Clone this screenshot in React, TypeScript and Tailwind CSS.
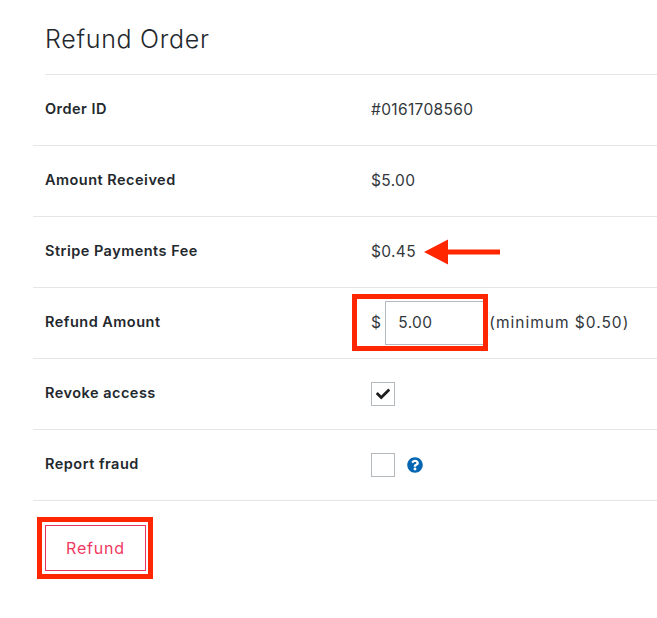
import type { ReactNode } from "react"
import { FaCheck, FaQuestionCircle } from "react-icons/fa"

function Row({ label, children }: { label: string; children: ReactNode }) {
  return (
    <div className="flex h-[71px] items-center border-b border-[#e3e7e8] pl-3">
      <div className="mb-[3px] w-[326px] text-[14.5px] font-semibold tracking-[0.48px] text-[#23282d]">{label}</div>
      <div className="flex items-center text-[15.5px] tracking-[0.35px] text-[#32373c]">{children}</div>
    </div>
  )
}

function CheckBox({ checked }: { checked?: boolean }) {
  return (
    <span className="flex h-6 w-6 items-center justify-center border border-[#b4b9be] bg-white">
      {checked && <FaCheck className="h-[14px] w-[14px] text-[#1e1e1e]" />}
    </span>
  )
}

export default function App() {
  return (
    <div className="relative h-[618px] w-[657px] overflow-hidden bg-white font-['Inter',sans-serif]">
      <div className="pl-[33px]">
        <div className="ml-3 flex h-[75px] items-center border-b border-[#e3e7e8] pt-[5px] text-[25px] font-light tracking-[0.7px] text-[#23282d]">
          Refund Order
        </div>

        <Row label="Order ID">#0161708560</Row>
        <Row label="Amount Received">$5.00</Row>
        <Row label="Stripe Payments Fee">
          <span>$0.45</span>
          <svg className="ml-[8px]" width="76" height="26" viewBox="0 0 76 26">
            <path d="M0 13 L24 0.5 V10.5 H76 V15.5 H24 V25.5 Z" fill="#ff2600" />
          </svg>
        </Row>
        <Row label="Refund Amount">
          <span className="mr-1">$</span>
          <div className="flex h-[44px] w-[100px] items-center border border-[#b4b9be] pl-3">5.00</div>
          <span className="ml-1 tracking-[1px]">(minimum $0.50)</span>
        </Row>
        <Row label="Revoke access">
          <CheckBox checked />
        </Row>
        <Row label="Report fraud">
          <CheckBox />
          <FaQuestionCircle className="ml-3 h-4 w-4 text-[#0366b3]" />
        </Row>

        <button className="mt-6 ml-3 flex h-[46px] w-[101px] items-center justify-center border border-[#e8315b] pb-[1px] text-[16px] tracking-[0.8px] text-[#f0385f]">
          Refund
        </button>
      </div>

      {/* annotation boxes drawn over the form */}
      <div className="absolute top-[294px] left-[352px] h-[57px] w-[136px] border-[5px] border-[#ff2600]" />
      <div className="absolute top-[517px] left-[37px] h-[62px] w-[116px] border-[5px] border-[#ff2600]" />
    </div>
  )
}
